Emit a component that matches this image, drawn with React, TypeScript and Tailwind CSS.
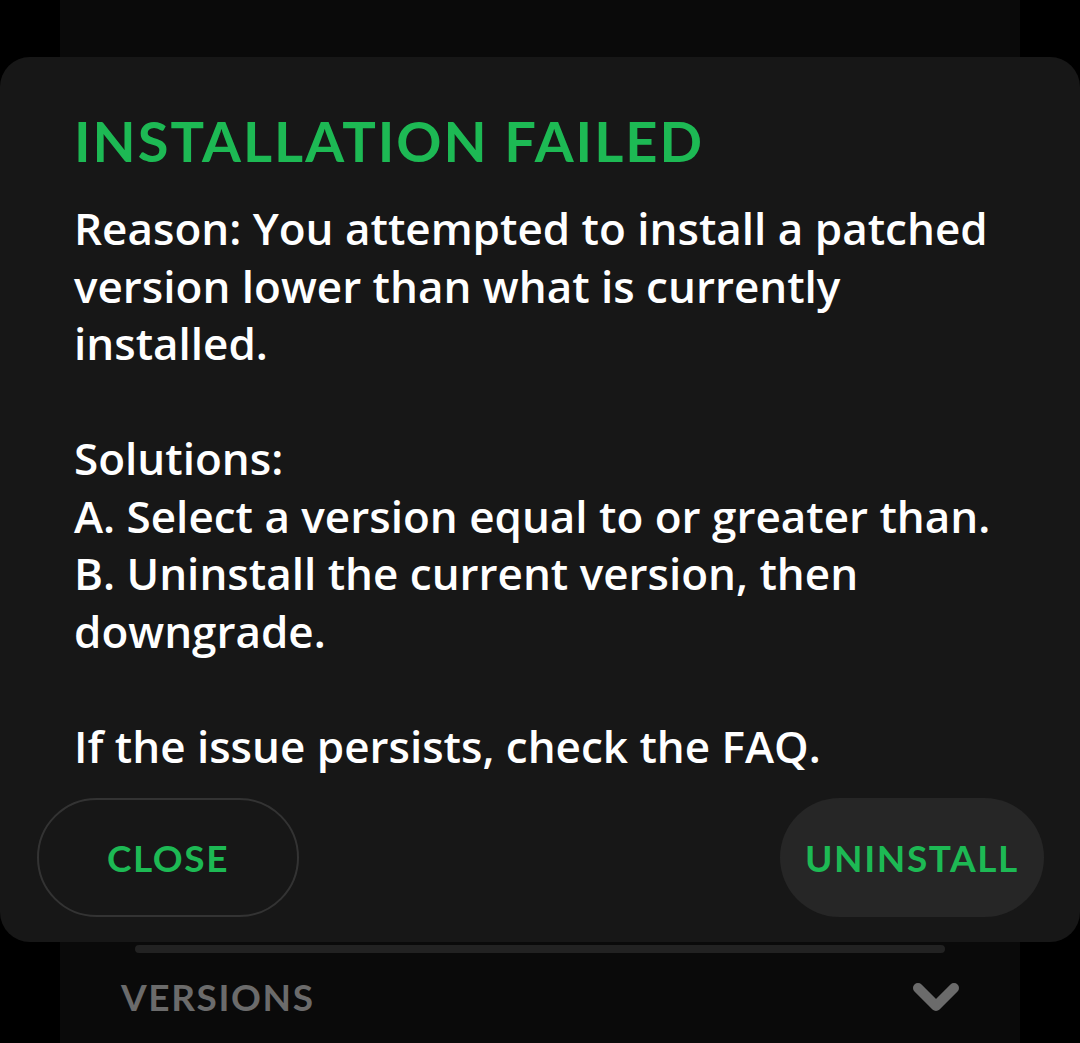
export default function App() {
  const lines = [
    "Reason: You attempted to install a patched",
    "version lower than what is currently",
    "installed.",
    "",
    "Solutions:",
    "A. Select a version equal to or greater than.",
    "B. Uninstall the current version, then",
    "downgrade.",
    "",
    "If the issue persists, check the FAQ.",
  ];

  const lato = { fontFamily: "Lato, 'Liberation Sans', sans-serif" };

  return (
    <div className="relative h-[1043px] w-[1080px] overflow-hidden bg-black">
      {/* sheet behind the dialog */}
      <div className="mx-[60px] flex h-full flex-col bg-[#0a0a0a]">
        <div className="h-[945px]" />
        <div className="mx-[75px] h-[8px] rounded-full bg-[#222222]" />
        <div className="flex items-center justify-between pl-[61px] pr-[60px] pt-[22px]">
          <span className="text-[37px] font-bold leading-[44px] tracking-[1.6px] text-[#6b6b6b]" style={lato}>
            VERSIONS
          </span>
          <svg width="48" height="30" viewBox="0 0 48 30" fill="none">
            <polyline
              points="6,6 24,24 42,6"
              stroke="#6b6b6b"
              strokeWidth="10"
              strokeLinecap="round"
              strokeLinejoin="round"
            />
          </svg>
        </div>
      </div>

      {/* dialog */}
      <div className="absolute left-0 right-0 top-[57px] h-[885px] rounded-[30px] bg-[#171717]">
        <div className="px-[74px] pt-[50px]">
          <h1 className="text-[56px] font-bold leading-[68px] tracking-[2px] text-[#1db954]" style={lato}>
            INSTALLATION FAILED
          </h1>
          <div
            className="mt-[25px] text-[44px] font-semibold leading-[57.5px] text-white"
            style={{ fontFamily: "'Open Sans', 'Noto Sans', sans-serif" }}
          >
            {lines.map((l, i) => (
              <div key={i} className="h-[57.5px] whitespace-nowrap">
                {l}
              </div>
            ))}
          </div>
        </div>
        <div className="mt-[23px] flex items-center justify-between pl-[37px] pr-[36px]">
          <button
            className="flex h-[119px] w-[262px] items-center justify-center rounded-full border-2 border-[#333333] text-[37px] font-bold tracking-[1.6px] text-[#1db954]"
            style={lato}
          >
            CLOSE
          </button>
          <button
            className="flex h-[119px] w-[264px] items-center justify-center rounded-full bg-[#262626] text-[37px] font-bold tracking-[1.6px] text-[#1db954]"
            style={lato}
          >
            UNINSTALL
          </button>
        </div>
      </div>
    </div>
  );
}
